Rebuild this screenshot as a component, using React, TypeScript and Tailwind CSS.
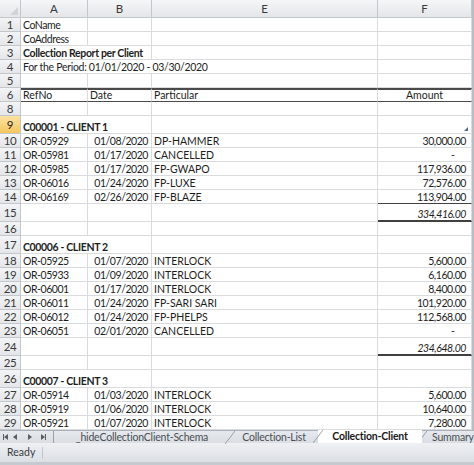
import React from "react";

type Row = {
  n: number;
  tall?: boolean;
  a?: string;
  b?: string;
  e?: string;
  f?: string;
  span?: 2 | 3;
  bold?: boolean;
  head?: boolean;
  sel?: boolean;
  dash?: boolean;
  total?: boolean;
  lineBelowF?: boolean;
  mark?: boolean;
};

const rows: Row[] = [
  { n: 1, a: "CoName" },
  { n: 2, a: "CoAddress" },
  { n: 3, a: "Collection Report per Client", span: 2, bold: true },
  { n: 4, a: "For the Period: 01/01/2020 - 03/30/2020", span: 3 },
  { n: 5 },
  { n: 6, a: "RefNo", b: "Date", e: "Particular", f: "Amount", head: true },
  { n: 8 },
  { n: 9, a: "C00001 - CLIENT 1", span: 2, bold: true, tall: true, sel: true, mark: true },
  { n: 10, a: "OR-05929", b: "01/08/2020", e: "DP-HAMMER", f: "30,000.00" },
  { n: 11, a: "OR-05981", b: "01/17/2020", e: "CANCELLED", dash: true },
  { n: 12, a: "OR-05985", b: "01/17/2020", e: "FP-GWAPO", f: "117,936.00" },
  { n: 13, a: "OR-06016", b: "01/24/2020", e: "FP-LUXE", f: "72,576.00" },
  { n: 14, a: "OR-06169", b: "02/26/2020", e: "FP-BLAZE", f: "113,904.00", lineBelowF: true },
  { n: 15, f: "334,416.00", total: true, tall: true },
  { n: 16 },
  { n: 17, a: "C00006 - CLIENT 2", span: 2, bold: true, tall: true },
  { n: 18, a: "OR-05925", b: "01/07/2020", e: "INTERLOCK", f: "5,600.00" },
  { n: 19, a: "OR-05933", b: "01/09/2020", e: "INTERLOCK", f: "6,160.00" },
  { n: 20, a: "OR-06001", b: "01/17/2020", e: "INTERLOCK", f: "8,400.00" },
  { n: 21, a: "OR-06011", b: "01/24/2020", e: "FP-SARI SARI", f: "101,920.00" },
  { n: 22, a: "OR-06012", b: "01/24/2020", e: "FP-PHELPS", f: "112,568.00" },
  { n: 23, a: "OR-06051", b: "02/01/2020", e: "CANCELLED", dash: true, lineBelowF: true },
  { n: 24, f: "234,648.00", total: true, tall: true },
  { n: 25 },
  { n: 26, a: "C00007 - CLIENT 3", span: 2, bold: true, tall: true },
  { n: 27, a: "OR-05914", b: "01/03/2020", e: "INTERLOCK", f: "5,600.00" },
  { n: 28, a: "OR-05919", b: "01/06/2020", e: "INTERLOCK", f: "10,640.00" },
  { n: 29, a: "OR-05921", b: "01/07/2020", e: "INTERLOCK", f: "7,280.00" },
];

const grid = "border-r border-b border-[#d9dbde]";
const headRule = "border-r border-r-[#d9dbde] border-t-2 border-t-[#4a4a4a] border-b border-b-[#4a4a4a]";

function RowHead({ n, sel }: { n: number; sel?: boolean }) {
  return (
    <div
      className={`w-[21px] shrink-0 flex items-center justify-center text-[11.5px] tracking-[-0.3px] border-r border-b border-[#c3c7cc] ${
        sel
          ? "bg-gradient-to-b from-[#fbe2a2] to-[#f4c65c] text-[#1f1f1f]"
          : "bg-gradient-to-b from-[#f3f4f6] to-[#e4e6e9] text-[#3a3a3a]"
      }`}
    >
      {n}
    </div>
  );
}

function SheetRow({ r }: { r: Row }) {
  const h = r.tall ? "h-[18px]" : "h-[14px]";
  const line = r.head ? headRule : grid;
  const cell = `flex items-end pb-[1px] whitespace-nowrap overflow-visible ${line}`;
  const num = "tracking-[-0.45px]";
  let fClass = `${cell} ${num} w-[94px] justify-end pr-[5px] relative`;
  if (r.head) fClass = `${cell} w-[94px] justify-center`;
  if (r.lineBelowF)
    fClass = `flex items-end pb-[1px] ${num} w-[94px] justify-end pr-[5px] border-r border-r-[#d9dbde] border-b border-b-[#404040]`;
  if (r.total)
    fClass = `flex items-end pb-[1px] ${num} w-[94px] justify-end pr-[5px] italic border-r border-r-[#d9dbde] border-b-2 border-b-[#404040]`;
  if (r.dash) fClass = `${cell} w-[94px] justify-end pr-[16px]`;

  return (
    <div className={`flex ${h}`}>
      <RowHead n={r.n} sel={r.sel} />
      {r.span === 3 ? (
        <div className={`${cell} w-[357px] pl-[2px] tracking-[-0.3px]`}>{r.a}</div>
      ) : r.span === 2 ? (
        <>
          <div className={`${cell} w-[131px] pl-[2px] font-bold tracking-[-0.35px]`}>{r.a}</div>
          <div className={`${cell} w-[226px] pl-[2px]`}>{r.e}</div>
        </>
      ) : (
        <>
          <div className={`${cell} w-[67px] pl-[2px] ${r.head ? "" : num}`}>{r.a}</div>
          <div className={`${cell} w-[64px] ${r.head ? "pl-[2px]" : `justify-end pr-[3px] ${num}`}`}>{r.b}</div>
          <div className={`${cell} w-[226px] pl-[2px]`}>{r.e}</div>
        </>
      )}
      <div className={fClass}>
        {r.dash ? "-" : r.f}
        {r.mark && (
          <svg className="absolute right-[3px] bottom-[2px]" width="4" height="4" viewBox="0 0 4 4">
            <path d="M4 0 L4 4 L0 4 Z" fill="#4f6b93" />
          </svg>
        )}
      </div>
    </div>
  );
}

function ColHead({ w, label }: { w: string; label: string }) {
  return (
    <div className={`${w} flex items-center justify-center text-[11.5px] border-r border-b border-[#c3c7cc] text-[#3a3a3a]`}>
      {label}
    </div>
  );
}

function Tri({ dir }: { dir: "l" | "r" }) {
  return (
    <svg width="4" height="6" viewBox="0 0 4 6">
      <path d={dir === "l" ? "M4 0 L0 3 L4 6 Z" : "M0 0 L4 3 L0 6 Z"} fill="#5a5f66" />
    </svg>
  );
}

function Slant() {
  return (
    <svg className="absolute left-[-5px] top-0" width="10" height="13" viewBox="0 0 10 13">
      <path d="M0 13 L10 0" stroke="#9aa1aa" strokeWidth="1" fill="none" />
    </svg>
  );
}

export default function App() {
  return (
    <div className="w-[474px] h-[465px] overflow-hidden bg-white flex flex-col font-['Lato',sans-serif] text-[10.5px] text-[#1d1d1d] leading-none">
      <div className="h-[430px] overflow-hidden border-r-2 border-[#b9bec5]">
        <div className="flex h-[18px] bg-gradient-to-b from-[#f5f6f7] to-[#e3e5e8]">
          <div className="w-[21px] flex items-end justify-end p-[2px] border-r border-b border-[#c3c7cc]">
            <svg width="8" height="8" viewBox="0 0 8 8">
              <path d="M8 0 L8 8 L0 8 Z" fill="#d0d3d7" />
            </svg>
          </div>
          <ColHead w="w-[67px]" label="A" />
          <ColHead w="w-[64px]" label="B" />
          <ColHead w="w-[226px]" label="E" />
          <ColHead w="w-[94px]" label="F" />
        </div>
        {rows.map((r) => (
          <SheetRow key={r.n} r={r} />
        ))}
      </div>

      <div className="h-[13px] flex bg-gradient-to-b from-[#e6e9ed] to-[#dadee3] border-t border-[#a9b0b9] text-[10.5px] tracking-[-0.2px] text-[#4a4f55]">
        <div className="w-[53px] flex items-center pl-[3px]">
          <div className="flex items-center">
            <div className="w-[1px] h-[6px] bg-[#5a5f66]" />
            <Tri dir="l" />
          </div>
          <div className="ml-[5px]">
            <Tri dir="l" />
          </div>
          <div className="ml-[11px]">
            <Tri dir="r" />
          </div>
          <div className="ml-[9px] flex items-center">
            <Tri dir="r" />
            <div className="w-[1px] h-[6px] bg-[#5a5f66]" />
          </div>
        </div>
        <div className="w-[177px] relative flex items-center justify-center border-l border-[#9aa1aa]">
          _hideCollectionClient-Schema
        </div>
        <div className="w-[88px] relative flex items-center justify-center">
          <Slant />
          Collection-List
        </div>
        <div className="w-[104px] relative flex items-center justify-center bg-white font-bold text-[#1a1a1a] mt-[-1px]">
          <Slant />
          Collection-Client
        </div>
        <div className="flex-1 relative flex items-center pl-[10px] overflow-hidden whitespace-nowrap">
          <Slant />
          Summary
        </div>
      </div>

      <div className="flex-1 flex flex-col bg-gradient-to-b from-[#eef0f3] to-[#d9dde2]">
        <div className="flex-1 flex items-center">
          <div className="pl-[7px] pr-[7px] text-[10.5px] text-[#3a3a3a] border-r border-[#c3c8ce] h-[12px] flex items-center">
            Ready
          </div>
        </div>
        <div className="h-[3px] bg-[#c5cad1]" />
      </div>
    </div>
  );
}
